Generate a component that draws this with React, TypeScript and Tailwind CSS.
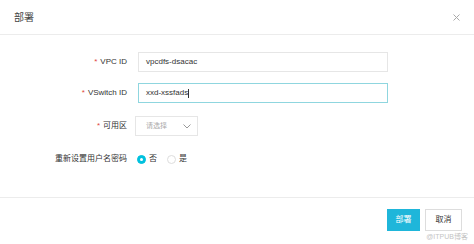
import { useState } from "react";

const font = { fontFamily: '"Liberation Sans", "Noto Sans CJK SC", sans-serif' };

function Label({ text, required }: { text: string; required?: boolean }) {
    return (
        <div className="w-[127px] shrink-0 text-right text-[8px] text-[#333] leading-none">
            {required && <span className="text-[#e0453c] mr-[3px]">*</span>}
            {text}
        </div>
    );
}

export default function App() {
    const [reset, setReset] = useState(false);

    return (
        <div className="w-[474px] h-[244px] bg-white relative" style={font}>
            <div className="h-[35px] flex items-center justify-between pl-[14px] pr-[14px] border-b border-[#ececec]">
                <span className="text-[10px] text-[#444]">部署</span>
                <svg width="7" height="7" viewBox="0 0 7 7" className="text-[#aaa]">
                    <path d="M0.5 0.5 L6.5 6.5 M6.5 0.5 L0.5 6.5" stroke="currentColor" strokeWidth="1" />
                </svg>
            </div>

            <div className="h-[162px] pt-[17px] flex flex-col">
                <div className="flex items-center gap-[11px] h-[20px]">
                    <Label text="VPC ID" required />
                    <div className="w-[250px] h-[20px] border border-[#e6e6e6] flex items-center px-[7px] text-[8px] text-[#333]">
                        vpcdfs-dsacac
                    </div>
                </div>
                <div className="flex items-center gap-[11px] h-[20px] mt-[11px]">
                    <Label text="VSwitch ID" required />
                    <div className="w-[250px] h-[20px] border border-[#8fd6df] flex items-center px-[7px] text-[8px] text-[#333]">
                        xxd-xssfads
                        <span className="w-px h-[9px] bg-[#333]" />
                    </div>
                </div>
                <div className="flex items-center gap-[8px] h-[20px] mt-[13px]">
                    <Label text="可用区" required />
                    <div className="w-[63px] h-[20px] border border-[#e6e6e6] flex items-center justify-between pl-[10px] pr-[6px] text-[7px] text-[#aaa]">
                        请选择
                        <svg width="8" height="5" viewBox="0 0 8 5">
                            <path d="M0.5 0.5 L4 4 L7.5 0.5" fill="none" stroke="#999" strokeWidth="1" />
                        </svg>
                    </div>
                </div>
                <div className="flex items-center gap-[10px] h-[16px] mt-[15px]">
                    <Label text="重新设置用户名密码" />
                    <div className="flex items-center gap-[3px] text-[8px] text-[#333]">
                        <button
                            onClick={() => setReset(false)}
                            className={`w-[9px] h-[9px] rounded-full border flex items-center justify-center ${!reset ? "border-[#00c1de] bg-[#00c1de]" : "border-[#ddd] bg-white"}`}
                        >
                            {!reset && <span className="w-[3px] h-[3px] rounded-full bg-white" />}
                        </button>
                        <span>否</span>
                        <button
                            onClick={() => setReset(true)}
                            className={`ml-[7px] w-[9px] h-[9px] rounded-full border flex items-center justify-center ${reset ? "border-[#00c1de] bg-[#00c1de]" : "border-[#ddd] bg-white"}`}
                        >
                            {reset && <span className="w-[3px] h-[3px] rounded-full bg-white" />}
                        </button>
                        <span>是</span>
                    </div>
                </div>
            </div>

            <div className="border-t border-[#ececec] flex justify-end gap-[5px] pt-[11px] pr-[12px]">
                <button className="w-[33px] h-[22px] bg-[#1fb6da] text-white text-[8px]">部署</button>
                <button className="w-[37px] h-[22px] border border-[#ddd] text-[#333] text-[8px]">取消</button>
            </div>

            <div className="absolute right-[6px] bottom-[4px] text-[7px] leading-none text-[#c4c4c4]">@ITPUB博客</div>
        </div>
    );
}
